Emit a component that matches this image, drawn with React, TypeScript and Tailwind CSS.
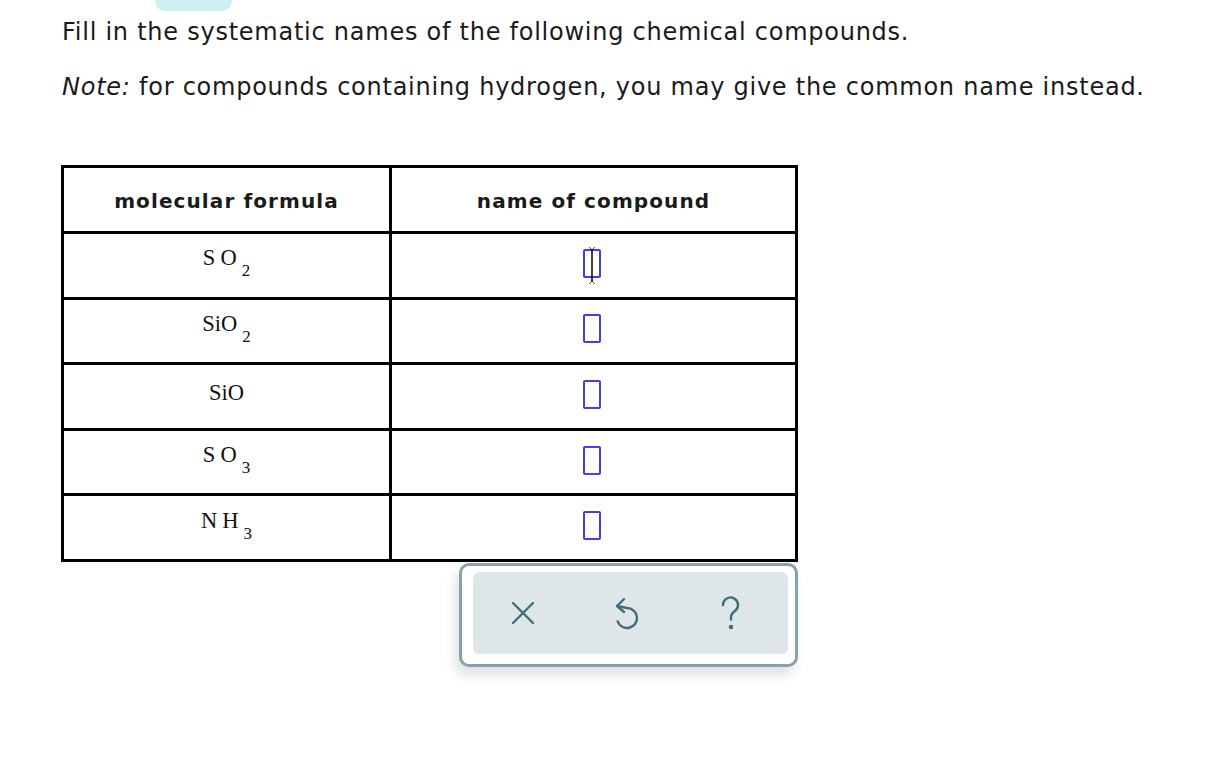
import React from 'react';

const ROWS: { base: string[]; sub?: string }[] = [
  { base: ['S', 'O'], sub: '2' },
  { base: ['SiO'], sub: '2' },
  { base: ['SiO'] },
  { base: ['S', 'O'], sub: '3' },
  { base: ['N', 'H'], sub: '3' },
];

const Formula: React.FC<{ base: string[]; sub?: string }> = ({ base, sub }) => (
  <span className="inline-flex items-start font-['Liberation_Serif',serif] text-[22.5px] leading-none text-[#111]">
    {base.map((b, i) => (
      <span key={i} className={i > 0 ? 'ml-[5px]' : ''}>
        {b}
      </span>
    ))}
    {sub && <span className="ml-[5px] mt-[15px] font-['Liberation_Serif',serif] text-[17px]">{sub}</span>}
  </span>
);

const AnswerBox: React.FC<{ active?: boolean }> = ({ active }) => (
  <div className="relative left-[-2px] mx-auto h-[29px] w-[18px] rounded-[2px] border-2 border-[#3d3df2] bg-white">
    {active && (
      <svg className="absolute left-[1px] top-[-5px]" width="12" height="39" viewBox="0 0 12 39">
        <path d="M3 1 L6 4 L9 1 M3 38 L6 35 L9 38" stroke="#555" strokeWidth="1" fill="none" />
        <line x1="6" y1="3" x2="6" y2="36" stroke="#111" strokeWidth="1.6" />
      </svg>
    )}
  </div>
);

const App: React.FC = () => {
  return (
    <div className="min-h-[775px] w-[1211px] bg-white font-['DejaVu_Sans',Verdana,sans-serif] text-[#1a1a1a]">
      <div className="ml-[155px] h-[11px] w-[77px] rounded-b-[10px] bg-[#cdeef3]" />
      <div className="pl-[62px]">
        <p className="mt-[7px] text-[24px] leading-[28px] tracking-[0.75px]">Fill in the systematic names of the following chemical compounds.</p>
        <p className="mt-[27px] text-[24px] leading-[28px] tracking-[0.75px]">
          <i>Note:</i> for compounds containing hydrogen, you may give the common name instead.
        </p>

        <table className="-ml-[1px] mt-[64px] w-[737px] border-collapse border-[3px] border-black">
          <thead>
            <tr className="h-[66px]">
              <th className="w-[328px] border-[3px] border-black pt-[2px] text-[20px] font-bold tracking-[1.1px]">molecular formula</th>
              <th className="border-[3px] border-black pt-[2px] text-[20px] font-bold tracking-[1.1px]">name of compound</th>
            </tr>
          </thead>
          <tbody>
            {ROWS.map((r, i) => (
              <tr key={i} className="h-[65.6px]">
                <td className="border-[3px] border-black pb-[4px] text-center">
                  <Formula base={r.base} sub={r.sub} />
                </td>
                <td className="border-[3px] border-black pb-[4px]">
                  <AnswerBox active={i === 0} />
                </td>
              </tr>
            ))}
          </tbody>
        </table>

        <div className="ml-[397px] mt-[1px] w-[339px] rounded-[10px] border-[3px] border-[#86a2ac] bg-white pb-[10px] pl-[11px] pr-[7px] pt-[6px] shadow-[-4px_8px_12px_rgba(0,0,0,0.12)]">
          <div className="flex h-[82px] items-center gap-[74px] rounded-[6px] bg-[#dfe6e8] pl-[35px]">
            <button className="flex h-[36px] w-[30px] items-center justify-center">
              <svg width="24" height="24" viewBox="0 0 24 24" fill="none" stroke="#3f6f7c" strokeWidth="2.4" strokeLinecap="round">
                <path d="M2 2 L22 22 M22 2 L2 22" />
              </svg>
            </button>
            <button className="flex h-[36px] w-[30px] items-center justify-center">
              <svg width="28" height="36" viewBox="0 0 28 36" fill="none" stroke="#3f6f7c" strokeWidth="2.4" strokeLinecap="round" strokeLinejoin="round">
                <path d="M11 4 L4 11 L11 17" />
                <path d="M4 11 L14 13 A10 10 0 1 1 4.6 26.4" />
              </svg>
            </button>
            <button className="flex h-[36px] w-[30px] items-center justify-center">
              <svg width="20" height="34" viewBox="0 0 20 34" fill="none" stroke="#3f6f7c" strokeWidth="2.4" strokeLinecap="round">
                <path d="M2 9 A7.5 7.5 0 1 1 14.5 14.5 C11 17 10 18.5 10 21 V23.5" />
                <circle cx="10" cy="31" r="1.1" fill="#3f6f7c" />
              </svg>
            </button>
          </div>
        </div>
      </div>
    </div>
  );
};

export default App;
